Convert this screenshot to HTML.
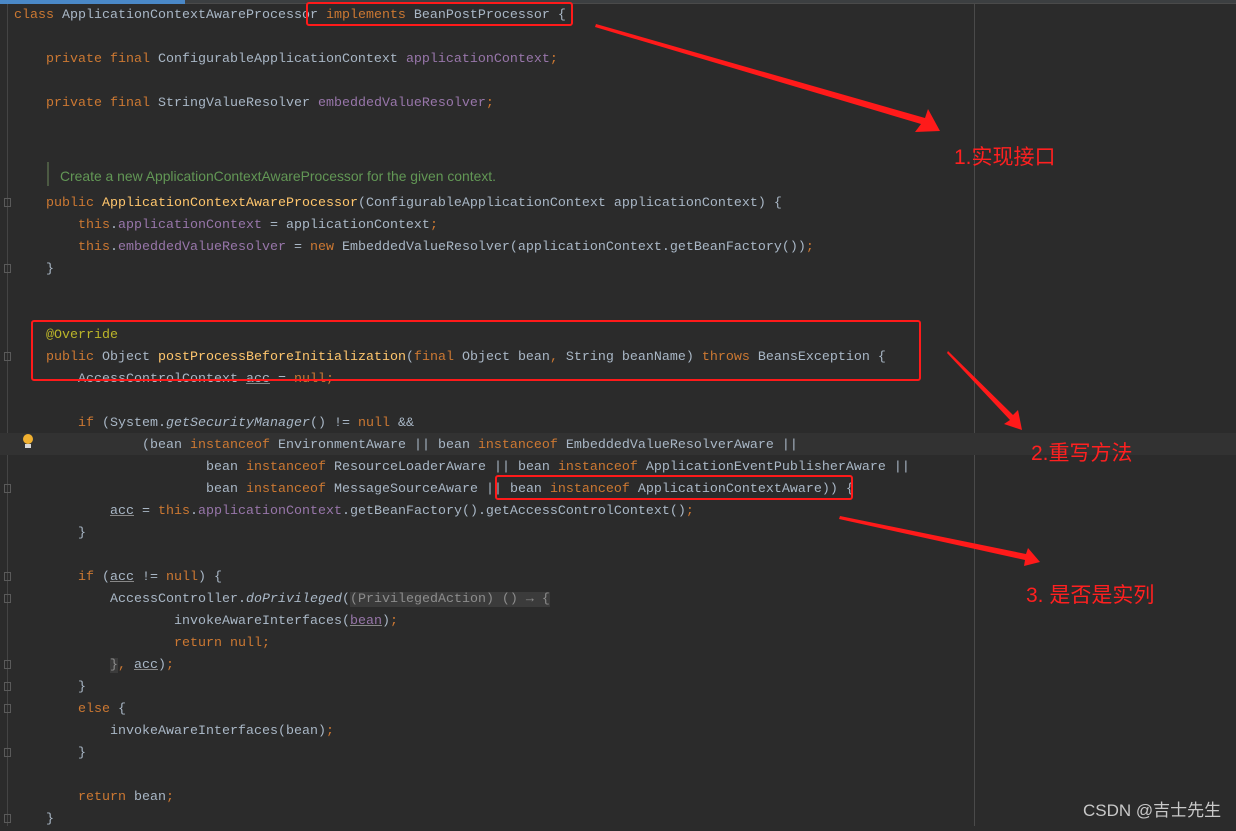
<!DOCTYPE html>
<html><head><meta charset="utf-8">
<style>
html,body{margin:0;padding:0}
body{width:1236px;height:826px;background:#2b2b2b;position:relative;overflow:hidden;font-family:"Liberation Mono",monospace;font-size:13.33px;color:#a9b7c6}
.l{position:absolute;white-space:pre;height:22px;line-height:22px;margin-top:2px}
.k{color:#cc7832}.f{color:#9876aa}.m{color:#ffc66d}.a{color:#bbb529}.s{color:#cc7832}.i{font-style:italic}
.sc{color:#cc7832}
.u{text-decoration:underline;text-decoration-color:#888}
.hint{background:#3b3b3b;color:#8c8c8c}
.lab{position:absolute;color:#ff2020;font-family:"Liberation Sans","Noto Sans CJK SC",sans-serif;font-size:21px;white-space:nowrap}
.fold{position:absolute;left:4px;width:7px;height:9px;border:1px solid #5a5a5a;box-sizing:border-box}
</style></head><body>
<div style="position:absolute;left:0;top:0;width:1236px;height:4px;background:#3c3f41"></div>
<div style="position:absolute;left:0;top:3px;width:1236px;height:1px;background:#4a4a4a"></div>
<div style="position:absolute;left:0;top:0;width:185px;height:4px;background:#4a88c7"></div>
<div style="position:absolute;left:7px;top:4px;width:1px;height:822px;background:#444"></div>
<div style="position:absolute;left:974px;top:4px;width:1px;height:822px;background:#4a4a4a"></div>
<div style="position:absolute;left:0;top:433px;width:1236px;height:22px;background:#323232"></div>
<div style="position:absolute;left:47px;top:162px;width:2px;height:24px;background:#4c5a43"></div>
<div style="position:absolute;left:23px;top:434px;width:10px;height:10px;border-radius:50%;background:#f0b030"></div>
<div style="position:absolute;left:25px;top:444px;width:6px;height:4px;background:#d8d8d8"></div>
<div class="fold" style="top:198px"></div><div class="fold" style="top:264px"></div>
<div class="fold" style="top:352px"></div><div class="fold" style="top:484px"></div>
<div class="fold" style="top:572px"></div><div class="fold" style="top:594px"></div>
<div class="fold" style="top:660px"></div><div class="fold" style="top:682px"></div>
<div class="fold" style="top:704px"></div><div class="fold" style="top:748px"></div>
<div class="fold" style="top:814px"></div>

<div class="l" style="left:14px;top:3px"><span class="k">class</span> ApplicationContextAwareProcessor <span class="k">implements</span> BeanPostProcessor {</div>
<div class="l" style="left:46px;top:47px"><span class="k">private final</span> ConfigurableApplicationContext <span class="f">applicationContext</span><span class="sc">;</span></div>
<div class="l" style="left:46px;top:91px"><span class="k">private final</span> StringValueResolver <span class="f">embeddedValueResolver</span><span class="sc">;</span></div>
<div class="l" style="left:60px;top:163px;font-family:'Liberation Sans',sans-serif;font-size:13.9px;color:#629755">Create a new ApplicationContextAwareProcessor for the given context.</div>
<div class="l" style="left:46px;top:191px"><span class="k">public</span> <span class="m">ApplicationContextAwareProcessor</span>(ConfigurableApplicationContext applicationContext) {</div>
<div class="l" style="left:78px;top:213px"><span class="k">this</span>.<span class="f">applicationContext</span> = applicationContext<span class="sc">;</span></div>
<div class="l" style="left:78px;top:235px"><span class="k">this</span>.<span class="f">embeddedValueResolver</span> = <span class="k">new</span> EmbeddedValueResolver(applicationContext.getBeanFactory())<span class="sc">;</span></div>
<div class="l" style="left:46px;top:257px">}</div>
<div class="l" style="left:46px;top:323px"><span class="a">@Override</span></div>
<div class="l" style="left:46px;top:345px"><span class="k">public</span> Object <span class="m">postProcessBeforeInitialization</span>(<span class="k">final</span> Object bean<span class="k">,</span> String beanName) <span class="k">throws</span> BeansException {</div>
<div class="l" style="left:78px;top:367px">AccessControlContext <span class="u">acc</span> = <span class="k">null</span><span class="sc">;</span></div>
<div class="l" style="left:78px;top:411px"><span class="k">if</span> (System.<span class="i">getSecurityManager</span>() != <span class="k">null</span> &amp;&amp;</div>
<div class="l" style="left:142px;top:433px">(bean <span class="k">instanceof</span> EnvironmentAware || bean <span class="k">instanceof</span> EmbeddedValueResolverAware ||</div>
<div class="l" style="left:206px;top:455px">bean <span class="k">instanceof</span> ResourceLoaderAware || bean <span class="k">instanceof</span> ApplicationEventPublisherAware ||</div>
<div class="l" style="left:206px;top:477px">bean <span class="k">instanceof</span> MessageSourceAware || bean <span class="k">instanceof</span> ApplicationContextAware)) {</div>
<div class="l" style="left:110px;top:499px"><span class="u">acc</span> = <span class="k">this</span>.<span class="f">applicationContext</span>.getBeanFactory().getAccessControlContext()<span class="sc">;</span></div>
<div class="l" style="left:78px;top:521px">}</div>
<div class="l" style="left:78px;top:565px"><span class="k">if</span> (<span class="u">acc</span> != <span class="k">null</span>) {</div>
<div class="l" style="left:110px;top:587px">AccessController.<span class="i">doPrivileged</span>(<span class="hint">(PrivilegedAction) () → {</span></div>
<div class="l" style="left:174px;top:609px">invokeAwareInterfaces(<span class="f u">bean</span>)<span class="sc">;</span></div>
<div class="l" style="left:174px;top:631px"><span class="k">return null</span><span class="sc">;</span></div>
<div class="l" style="left:110px;top:653px"><span class="hint">}</span><span class="k">,</span> <span class="u">acc</span>)<span class="sc">;</span></div>
<div class="l" style="left:78px;top:675px">}</div>
<div class="l" style="left:78px;top:697px"><span class="k">else</span> {</div>
<div class="l" style="left:110px;top:719px">invokeAwareInterfaces(bean)<span class="sc">;</span></div>
<div class="l" style="left:78px;top:741px">}</div>
<div class="l" style="left:78px;top:785px"><span class="k">return</span> bean<span class="sc">;</span></div>
<div class="l" style="left:46px;top:807px">}</div>

<svg style="position:absolute;left:0;top:0" width="1236" height="826">
<g fill="none" stroke="#ff1a1a" stroke-width="2">
<rect x="307" y="3" width="265" height="22" rx="2"/>
<rect x="32" y="321" width="888" height="59" rx="2"/>
<rect x="496" y="476" width="356" height="23" rx="2"/>
</g>
<g fill="#ff1a1a">
<polygon points="596,24 925,118 928,109 940,131 915,132 921,124 595,27"/>
<polygon points="948,351 1013,415 1018,410 1022,430 1004,424 1010,420 947,353"/>
<polygon points="840,516 1026,554 1028,548 1040,562 1024,566 1025,560 839,519"/>
</g>
</svg>
<div class="lab" style="left:954px;top:141px">1.实现接口</div>
<div class="lab" style="left:1031px;top:437px">2.重写方法</div>
<div class="lab" style="left:1026px;top:579px">3. 是否是实列</div>
<div style="position:absolute;left:1083px;top:796px;color:#c8c8c8;font-family:'Liberation Sans','Noto Sans CJK SC',sans-serif;font-size:17px;white-space:nowrap">CSDN @吉士先生</div>
</body></html>
